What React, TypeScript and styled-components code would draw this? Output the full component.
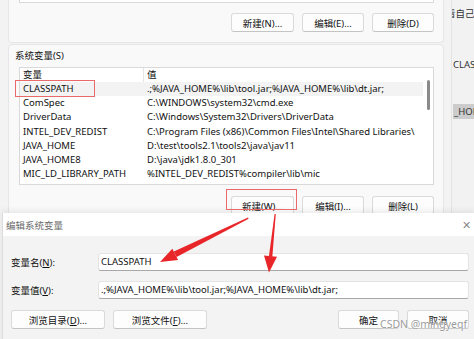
import styled, { createGlobalStyle } from 'styled-components';

const GlobalStyle = createGlobalStyle`
  html, body {
    margin: 0;
    padding: 0;
  }
  body {
    font-family: "Noto Sans", "Noto Sans CJK SC", sans-serif;
    background: #f3f3f3;
  }
`;

const Screen = styled.div`
  position: relative;
  width: 474px;
  height: 339px;
  overflow: hidden;
  display: flex;
  font-size: 9.5px;
  color: #111;
`;

const EnvWindow = styled.div`
  width: 452px;
  flex: none;
  box-sizing: border-box;
  padding: 0 7px 0 8px;
  background: #f3f3f3;
  border-right: 1px solid #e3e3e3;
  display: flex;
  flex-direction: column;
`;

const GroupPanel = styled.div<{ $cutTop?: boolean }>`
  background: #f9f9f9;
  border: 1px solid #e6e6e6;
  border-top: ${p => (p.$cutTop ? 'none' : '1px solid #e6e6e6')};
  border-radius: ${p => (p.$cutTop ? '0 0 4px 4px' : '4px')};
  margin-top: ${p => (p.$cutTop ? '0' : '1px')};
  padding: ${p => (p.$cutTop ? '0 9px 10px 10px' : '4px 9px 10px 10px')};
`;

const ListStub = styled.div`
  height: 2px;
  background: #fff;
  border: 1px solid #d9d9d9;
  border-top: none;
`;

const GroupLabel = styled.div`
  line-height: 13px;
  margin-left: -4px;
`;

const ListBox = styled.div`
  margin-top: 5px;
  height: 118px;
  box-sizing: border-box;
  background: #fff;
  border: 1px solid #d9d9d9;
  display: flex;
  overflow: hidden;
`;

const Table = styled.div`
  flex: 1;
  display: flex;
  flex-direction: column;
`;

const Row = styled.div<{ $header?: boolean; $selected?: boolean }>`
  display: grid;
  grid-template-columns: 124px 1fr;
  height: ${p => (p.$header ? '14px' : '14.2px')};
  line-height: ${p => (p.$header ? '14px' : '14.2px')};
  flex: none;
  background: ${p => (p.$selected ? '#f3f3f3' : 'transparent')};
  white-space: nowrap;
`;

const Cell = styled.div<{ $divider?: boolean }>`
  padding-left: 3px;
  overflow: hidden;
  border-right: ${p => (p.$divider ? '1px solid #e5e5e5' : 'none')};
`;

const ScrollTrack = styled.div`
  width: 10px;
  flex: none;
  display: flex;
  justify-content: center;
  padding-top: 12px;
`;

const ScrollThumb = styled.div`
  width: 3px;
  height: 30px;
  border-radius: 2px;
  background: #8a8a8a;
`;

const ButtonRow = styled.div<{ $gapTop: number }>`
  display: flex;
  justify-content: flex-end;
  gap: 8px;
  margin-top: ${p => p.$gapTop}px;
`;

const WinButton = styled.button<{ $w: number }>`
  width: ${p => p.$w}px;
  height: 19px;
  padding: 0;
  box-sizing: border-box;
  font-family: inherit;
  font-size: 9.5px;
  color: #111;
  background: #fdfdfd;
  border: 1px solid #dadada;
  border-bottom-color: #c4c4c4;
  border-radius: 3px;
  white-space: nowrap;
`;

const BehindStrip = styled.div`
  flex: 1;
  background: #f2f2f2;
  overflow: hidden;
  white-space: nowrap;
  color: #333;
  display: flex;
  flex-direction: column;
`;

const StripLine = styled.div<{ $top: number; $shift?: number; $hl?: boolean }>`
  margin-top: ${p => p.$top}px;
  margin-left: ${p => p.$shift ?? 1}px;
  line-height: 15px;
  height: 15px;
  padding-left: ${p => (p.$hl ? 1 : 0)}px;
  background: ${p => (p.$hl ? '#cccccc' : 'transparent')};
`;

const EditDialog = styled.div`
  position: absolute;
  top: 213px;
  left: 2px;
  width: 472px;
  bottom: -10px;
  background: #f3f3f3;
  border-left: 1px solid #dcdcdc;
  box-shadow: 0 -2px 6px rgba(0, 0, 0, 0.08);
  display: flex;
  flex-direction: column;
`;

const TitleBar = styled.div`
  height: 23px;
  flex: none;
  background: #ffffff;
  display: flex;
  align-items: center;
  justify-content: space-between;
  padding: 0 4px 0 3px;
  color: #6a6a6a;
`;

const CloseGlyph = styled.span`
  font-size: 11px;
  color: #8a8a8a;
  font-weight: 300;
`;

const DialogBody = styled.div`
  padding: 17px 6px 0 8px;
  display: flex;
  flex-direction: column;
  gap: 10px;
`;

const FieldRow = styled.div`
  display: grid;
  grid-template-columns: 87px 1fr;
  align-items: center;
`;

const FieldLabel = styled.label`
  u {
    text-decoration: underline;
    text-underline-offset: 1px;
  }
`;

const TextInput = styled.div`
  height: 18px;
  box-sizing: border-box;
  background: #fff;
  border: 1px solid #e4e4e4;
  border-bottom-color: #a8a8a8;
  border-radius: 3px;
  padding-left: 2px;
  line-height: 16px;
  white-space: nowrap;
  overflow: hidden;
`;

const DialogButtons = styled.div`
  display: flex;
  gap: 8px;
  margin-top: 1px;
`;

const Spacer = styled.div`
  flex: 1;
`;

const Watermark = styled.div`
  position: absolute;
  left: 380px;
  top: 317px;
  font-size: 10.5px;
  color: rgba(120, 120, 120, 0.75);
  text-shadow: 0 0 2px #fff, 0 0 1px #fff;
  pointer-events: none;
  white-space: nowrap;
`;

const Annotations = styled.svg`
  position: absolute;
  left: 0;
  top: 0;
  pointer-events: none;
`;

const systemVars: [string, string][] = [
  ['CLASSPATH', '.;%JAVA_HOME%\\lib\\tool.jar;%JAVA_HOME%\\lib\\dt.jar;'],
  ['ComSpec', 'C:\\WINDOWS\\system32\\cmd.exe'],
  ['DriverData', 'C:\\Windows\\System32\\Drivers\\DriverData'],
  ['INTEL_DEV_REDIST', 'C:\\Program Files (x86)\\Common Files\\Intel\\Shared Libraries\\'],
  ['JAVA_HOME', 'D:\\test\\tools2.1\\tools2\\java\\jav11'],
  ['JAVA_HOME8', 'D:\\java\\jdk1.8.0_301'],
  ['MIC_LD_LIBRARY_PATH', '%INTEL_DEV_REDIST%compiler\\lib\\mic'],
  ['NUMBER_OF_PROCESSORS', '8'],
];

function App() {
  return (
    <>
      <GlobalStyle />
      <Screen>
        <EnvWindow>
          <GroupPanel $cutTop>
            <ListStub />
            <ButtonRow $gapTop={10}>
              <WinButton $w={63}>新建(N)...</WinButton>
              <WinButton $w={62}>编辑(E)...</WinButton>
              <WinButton $w={62}>删除(D)</WinButton>
            </ButtonRow>
          </GroupPanel>
          <GroupPanel>
            <GroupLabel>系统变量(S)</GroupLabel>
            <ListBox>
              <Table>
                <Row $header>
                  <Cell $divider>变量</Cell>
                  <Cell>值</Cell>
                </Row>
                {systemVars.map(([name, value], i) => (
                  <Row key={name} $selected={i === 0}>
                    <Cell>{name}</Cell>
                    <Cell>{value}</Cell>
                  </Row>
                ))}
              </Table>
              <ScrollTrack>
                <ScrollThumb />
              </ScrollTrack>
            </ListBox>
            <ButtonRow $gapTop={11}>
              <WinButton $w={63}>新建(W)...</WinButton>
              <WinButton $w={62}>编辑(I)...</WinButton>
              <WinButton $w={62}>删除(L)</WinButton>
            </ButtonRow>
          </GroupPanel>
        </EnvWindow>

        <BehindStrip>
          <StripLine $top={6} $shift={-6}>看自己</StripLine>
          <StripLine $top={36}>CLASSPATH</StripLine>
          <StripLine $top={32} $hl>_HOME</StripLine>
        </BehindStrip>

        <EditDialog>
          <TitleBar>
            <span>编辑系统变量</span>
            <CloseGlyph>✕</CloseGlyph>
          </TitleBar>
          <DialogBody>
            <FieldRow>
              <FieldLabel>变量名(<u>N</u>):</FieldLabel>
              <TextInput>CLASSPATH</TextInput>
            </FieldRow>
            <FieldRow>
              <FieldLabel>变量值(<u>V</u>):</FieldLabel>
              <TextInput>.;%JAVA_HOME%\lib\tool.jar;%JAVA_HOME%\lib\dt.jar;</TextInput>
            </FieldRow>
            <DialogButtons>
              <WinButton $w={94}>浏览目录(<u>D</u>)...</WinButton>
              <WinButton $w={94}>浏览文件(<u>F</u>)...</WinButton>
              <Spacer />
              <WinButton $w={61}>确定</WinButton>
              <WinButton $w={62}>取消</WinButton>
            </DialogButtons>
          </DialogBody>
        </EditDialog>

        <Watermark>CSDN @mingyeqf</Watermark>

        <Annotations width={474} height={339} viewBox="0 0 474 339">
          <rect x={15.5} y={80.5} width={79} height={16} fill="none" stroke="#e86a6a" strokeWidth={1} />
          <rect x={226.5} y={189.5} width={70} height={20} fill="none" stroke="#e86a6a" strokeWidth={1} />
          <polygon points="248,217.5 248.6,218.7 176.6,257 173.8,251.6" fill="#e8262a" />
          <polygon points="160,262 172.3,248.8 178.1,260" fill="#e8262a" />
          <polygon points="274.6,214 275.8,214 272.3,257 268.9,256.6" fill="#e8262a" />
          <polygon points="269,272.5 264,255.5 277,256.8" fill="#e8262a" />
        </Annotations>
      </Screen>
    </>
  );
}

export default App;
